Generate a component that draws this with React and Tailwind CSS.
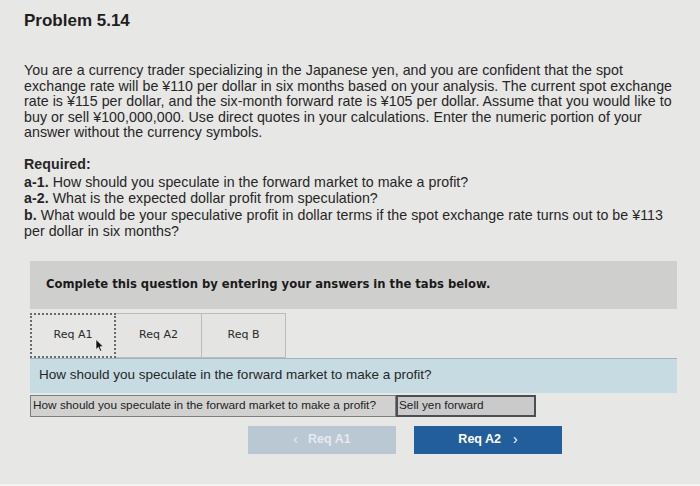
export default function App() {
  const sans = { fontFamily: '"Liberation Sans", Arial, sans-serif' };
  return (
    <div className="relative w-[700px] h-[486px] overflow-hidden bg-[#e7e7e5] text-[#262626]" style={sans}>
      <div className="pl-[24px] pt-[11px]">
        <div className="text-[17px] font-bold leading-[20px] text-[#1e1e1e]">Problem 5.14</div>
        <div className="mt-[32px] text-[14.2px] leading-[15.5px] tracking-[0.05px]">
          <div className="whitespace-nowrap">You are a currency trader specializing in the Japanese yen, and you are confident that the spot</div>
          <div className="whitespace-nowrap">exchange rate will be ¥110 per dollar in six months based on your analysis. The current spot exchange</div>
          <div className="whitespace-nowrap">rate is ¥115 per dollar, and the six-month forward rate is ¥105 per dollar. Assume that you would like to</div>
          <div className="whitespace-nowrap">buy or sell ¥100,000,000. Use direct quotes in your calculations. Enter the numeric portion of your</div>
          <div className="whitespace-nowrap">answer without the currency symbols.</div>
        </div>
        <div className="mt-[15px] text-[14.2px] leading-[16px] tracking-[0.05px]">
          <div className="font-bold">Required:</div>
          <div className="mt-[2px] leading-[16.5px]">
            <div className="whitespace-nowrap"><span className="font-bold">a-1.</span> How should you speculate in the forward market to make a profit?</div>
            <div className="whitespace-nowrap"><span className="font-bold">a-2.</span> What is the expected dollar profit from speculation?</div>
            <div className="whitespace-nowrap"><span className="font-bold">b.</span> What would be your speculative profit in dollar terms if the spot exchange rate turns out to be ¥113</div>
            <div className="whitespace-nowrap">per dollar in six months?</div>
          </div>
        </div>
      </div>

      <div className="ml-[30px] mt-[21px] w-[647px]">
        <div className="h-[48px] bg-[#cfcfcd] flex items-center pl-[16px]">
          <span className="text-[11.6px] font-bold text-[#1a1a1a]" style={{ fontFamily: '"DejaVu Sans", Verdana, sans-serif' }}>
            Complete this question by entering your answers in the tabs below.
          </span>
        </div>
        <div className="mt-[4px] flex text-[11px] text-[#2a2a2a]" style={{ fontFamily: '"DejaVu Sans", Verdana, sans-serif' }}>
          <div className="relative w-[86px] h-[45px] border-2 border-dotted border-[#6b6b6b] bg-[#e6e6e4] flex items-center justify-center">
            <span>Req A1</span>
            <svg className="absolute left-[63px] top-[24px]" width="9" height="13" viewBox="0 0 9 13">
              <path d="M1 0.5 L1 10.5 L3.4 8.3 L5.2 12.3 L6.7 11.6 L5 7.8 L8.2 7.6 Z" fill="#111" stroke="#fff" strokeWidth="0.6" />
            </svg>
          </div>
          <div className="w-[86px] h-[45px] border border-[#bcbcba] border-l-0 bg-[#e4e4e2] flex items-center justify-center">Req A2</div>
          <div className="w-[84px] h-[45px] border border-[#bcbcba] border-l-0 bg-[#e4e4e2] flex items-center justify-center">Req B</div>
        </div>
        <div className="h-[35px] bg-[#c7dce2] border-t border-[#9fb4ba] flex items-center pl-[9px]">
          <span className="text-[13.5px] text-[#262626]">How should you speculate in the forward market to make a profit?</span>
        </div>
        <div className="mt-[2px] flex h-[22px] text-[11.8px] text-[#222]">
          <div className="w-[366px] bg-[#d1d1cf] border border-[#7d7d7d] flex items-center pl-[2px] whitespace-nowrap">
            How should you speculate in the forward market to make a profit?
          </div>
          <div className="w-[140px] bg-[#cacaca] border-2 border-[#4a4f55] flex items-center pl-[1px] whitespace-nowrap">
            Sell yen forward
          </div>
        </div>
        <div className="mt-[9px] flex ml-[218px] gap-[18px]">
          <div className="w-[148px] h-[28px] bg-[#bac8d4] flex items-center justify-center text-[12.5px] font-bold text-[#e4eaf0]">
            <span className="mr-[10px] text-[14px] font-normal">‹</span>Req A1
          </div>
          <div className="w-[148px] h-[28px] bg-[#225d9c] flex items-center justify-center text-[12.5px] font-bold text-white">
            Req A2<span className="ml-[12px] text-[14px] font-normal">›</span>
          </div>
        </div>
      </div>
      <div className="absolute left-0 right-0 bottom-0 h-[2px] bg-[#f4f4f2]" />
    </div>
  );
}
